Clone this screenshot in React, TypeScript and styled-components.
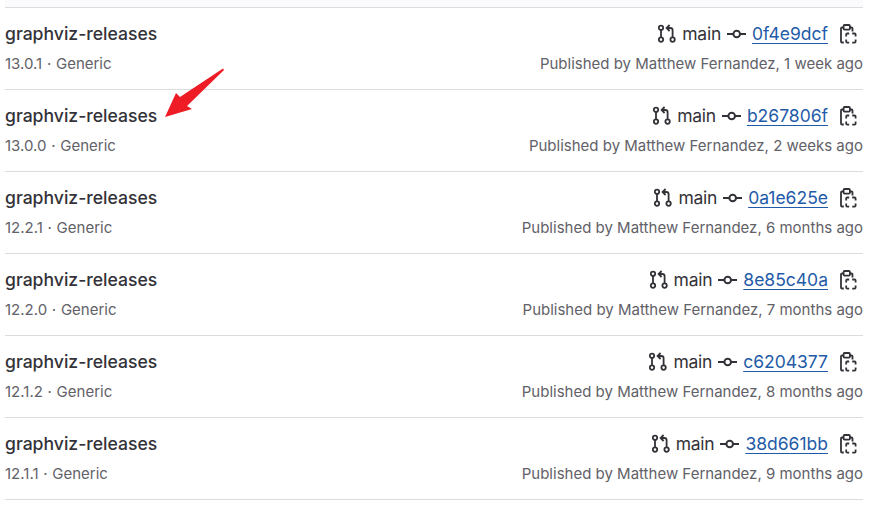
import React from 'react'
import styled, { createGlobalStyle } from 'styled-components'

const GlobalStyle = createGlobalStyle`
  html, body {
    margin: 0;
    padding: 0;
    background: #fff;
    font-family: Inter, "Noto Sans", sans-serif;
  }
`

const Page = styled.div`
  position: relative;
  width: 879px;
  height: 510px;
  overflow: hidden;
  padding: 0 16px 0 5px;
  box-sizing: border-box;
`

const TopStrip = styled.div`
  height: 7px;
  background: #fbfafd;
`

const List = styled.ul`
  list-style: none;
  margin: 0;
  padding: 0;
  border-top: 1px solid #dcdcde;
`

const Row = styled.li`
  display: flex;
  justify-content: space-between;
  height: 67px;
  padding-top: 14px;
  border-bottom: 1px solid #dcdcde;
`

const Column = styled.div<{ $end?: boolean }>`
  display: flex;
  flex-direction: column;
  gap: 8px;
  align-items: ${(p) => (p.$end ? 'flex-end' : 'flex-start')};
`

const Title = styled.div`
  font-size: 17.6px;
  font-weight: 500;
  line-height: 24px;
  color: #333238;
`

const Meta = styled.div`
  font-size: 15px;
  line-height: 20px;
  color: #626168;
`

const VersionMeta = styled(Meta)`
  word-spacing: 0.5px;
`

const Commit = styled.div`
  display: flex;
  align-items: center;
  height: 24px;
  font-size: 17.5px;
  color: #333238;
`

const BranchName = styled.span`
  margin: 0 0 2px 6px;
  letter-spacing: -0.25px;
`

const Sha = styled.a`
  margin: 0 0 2px 6px;
  color: #1f5ba8;
  text-decoration: underline;
  text-underline-offset: 3px;
  text-decoration-thickness: 1px;
`

const CopyButton = styled.span`
  display: inline-flex;
  margin-left: 12px;
  margin-right: 6px;
`

const CommitGlyph = styled.svg`
  margin-left: 6px;
`

const Arrow = styled.svg`
  position: absolute;
  left: 160px;
  top: 64px;
`

const BranchIcon = () => (
  <svg width="18" height="20" viewBox="0 0 18 20" fill="none" stroke="#333238" strokeWidth="1.8">
    <circle cx="3" cy="3.8" r="2.2" />
    <circle cx="3" cy="15.6" r="2.2" />
    <circle cx="14.6" cy="15.6" r="2.2" />
    <path d="M3 6v7.4M14.6 13.4V6.3A2.3 2.3 0 0 0 12.3 4H9.5M11.6 1 8.6 4l3 3" />
  </svg>
)

const CommitIcon = () => (
  <CommitGlyph width="19" height="16" viewBox="0 0 19 16" fill="none" stroke="#333238" strokeWidth="2">
    <circle cx="9.7" cy="8" r="3.3" />
    <path d="M0 8h6.4M13 8H19" />
  </CommitGlyph>
)

const CopyIcon = () => (
  <svg width="17" height="20" viewBox="0 0 17 20" fill="none" stroke="#333238" strokeWidth="1.8">
    <path d="M3.5 3.5H2a1 1 0 0 0-1 1V17.5a1 1 0 0 0 1 1h1.8" />
    <path d="M10 3.5h1.5a1 1 0 0 1 1 1V7.5" />
    <rect x="3.6" y="1" width="6.3" height="4.6" rx="1" />
    <path d="M6.2 12.6v-2.1a1 1 0 0 1 1-1h2M12.2 9.5h2.4a1 1 0 0 1 1 1v2.1M15.6 15.4v2.2a1 1 0 0 1-1 1h-2.4M9.2 18.6h-2a1 1 0 0 1-1-1v-2.2" />
  </svg>
)

const releases = [
  { version: '13.0.1', sha: '0f4e9dcf', age: '1 week ago' },
  { version: '13.0.0', sha: 'b267806f', age: '2 weeks ago' },
  { version: '12.2.1', sha: '0a1e625e', age: '6 months ago' },
  { version: '12.2.0', sha: '8e85c40a', age: '7 months ago' },
  { version: '12.1.2', sha: 'c6204377', age: '8 months ago' },
  { version: '12.1.1', sha: '38d661bb', age: '9 months ago' },
]

export default function App() {
  return (
    <Page>
      <GlobalStyle />
      <TopStrip />
      <List>
        {releases.map((r) => (
          <Row key={r.sha}>
            <Column>
              <Title>graphviz-releases</Title>
              <VersionMeta>{r.version} · Generic</VersionMeta>
            </Column>
            <Column $end>
              <Commit>
                <BranchIcon />
                <BranchName>main</BranchName>
                <CommitIcon />
                <Sha href="#">{r.sha}</Sha>
                <CopyButton>
                  <CopyIcon />
                </CopyButton>
              </Commit>
              <Meta>Published by Matthew Fernandez, {r.age}</Meta>
            </Column>
          </Row>
        ))}
      </List>
      <Arrow width="70" height="56" viewBox="0 0 70 56">
        <path d="M63 4.5 L64 6 L27 42 L32 45 L5 53 L16 29 L20 33 Z" fill="#ee1c25" />
      </Arrow>
    </Page>
  )
}
